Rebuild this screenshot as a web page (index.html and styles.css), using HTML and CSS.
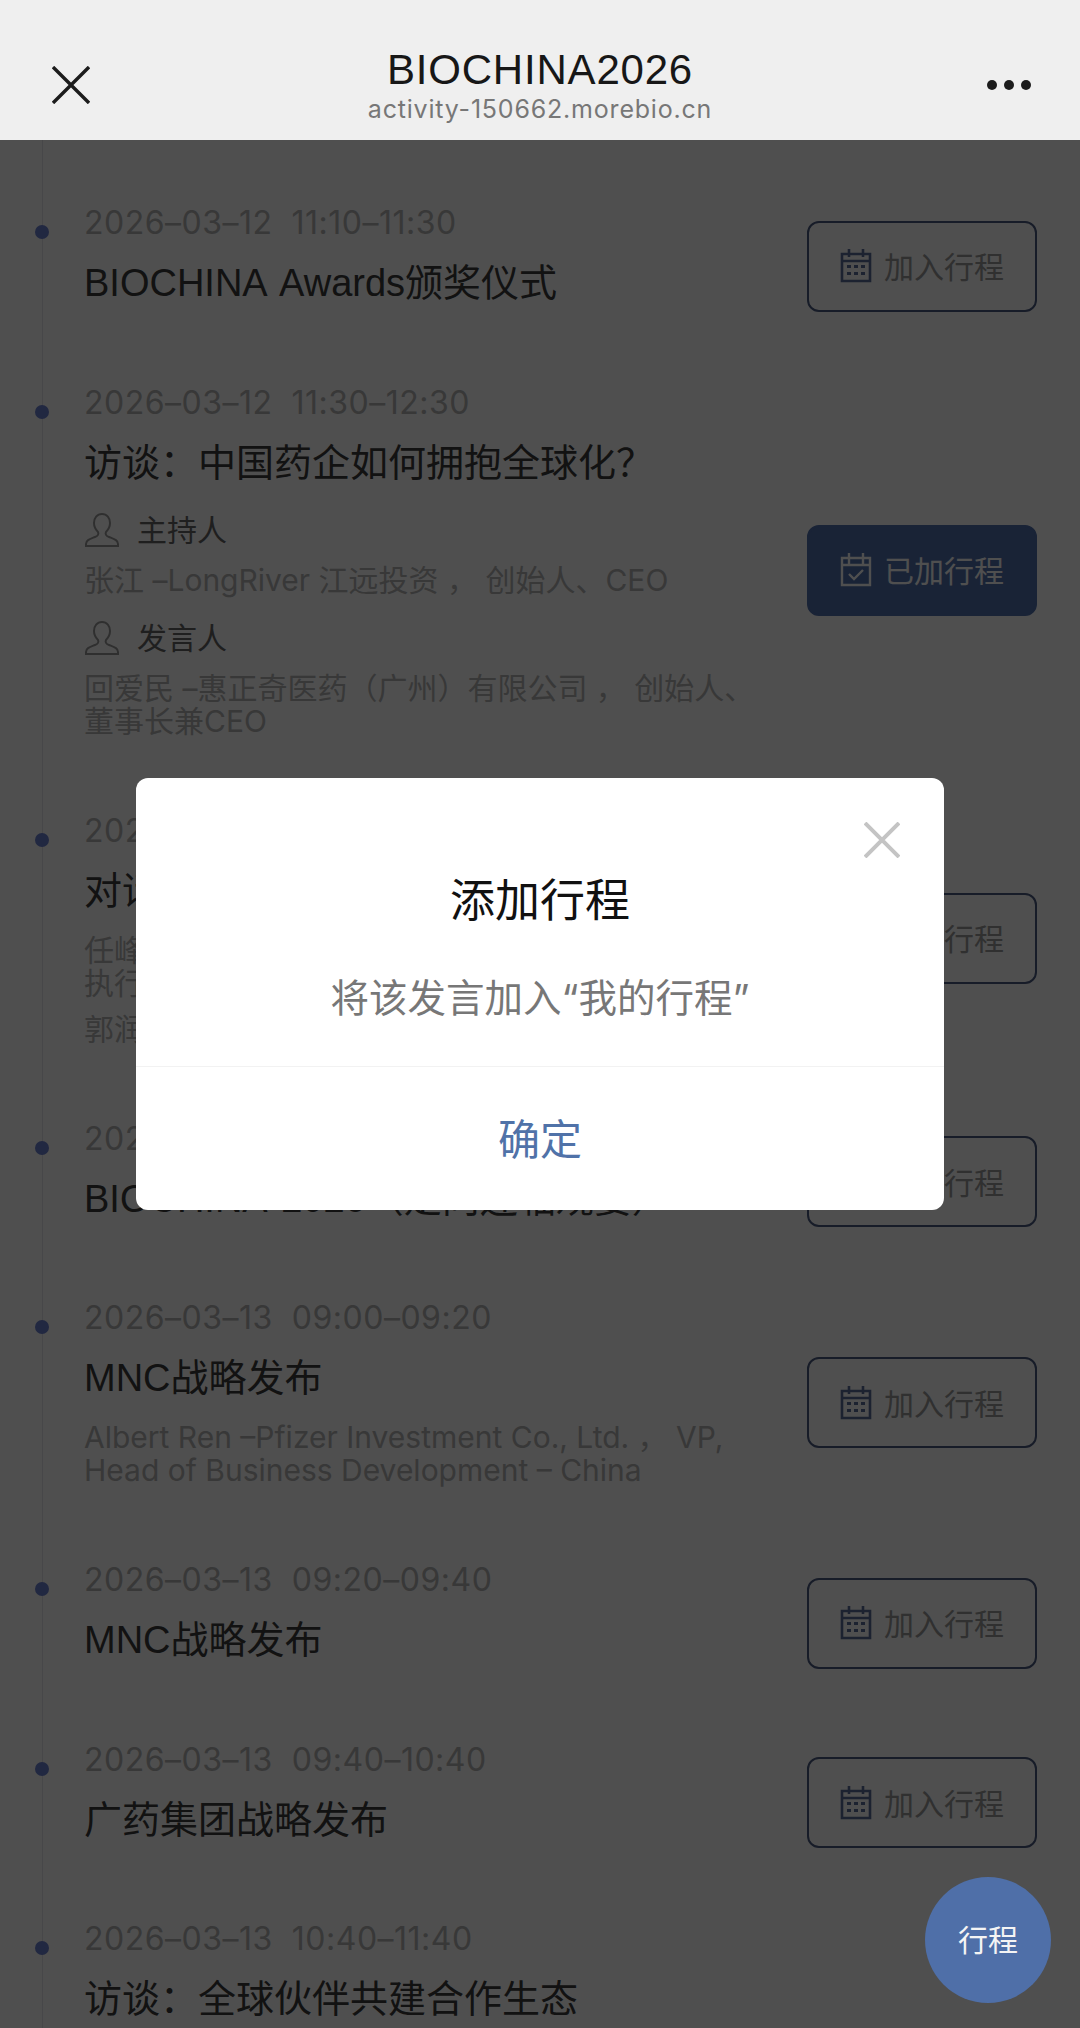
FILE: index.html
```html
<!DOCTYPE html>
<html lang="zh-CN">
  <head>
    <meta charset="UTF-8" />
    <title>BIOCHINA2026</title>
    <link rel="stylesheet" href="styles.css">
  </head>
  <body>
    <svg class="defs" width="0" height="0">
      <symbol id="ico-cal" viewBox="0 0 32 36">
        <path d="M2 7h28v27H2z M2 14h28 M9 2v8 M23 2v8" fill="none" stroke="currentColor" stroke-width="2.6"/>
        <path d="M7 18h4v3H7z M14 18h4v3h-4z M21 18h4v3h-4z M7 25h4v3H7z M14 25h4v3h-4z M21 25h4v3h-4z" fill="currentColor"/>
      </symbol>
      <symbol id="ico-cal-done" viewBox="0 0 32 36">
        <path d="M2 7h28v27H2z M2 14h28 M9 2v12 M23 2v12" fill="none" stroke="currentColor" stroke-width="2.4"/>
        <path d="M9 23l5 5 9-9" fill="none" stroke="currentColor" stroke-width="2.4"/>
      </symbol>
      <symbol id="ico-user" viewBox="0 0 36 36">
        <path d="M18 2c-5 0-8 4-8 9 0 4 2 7 4 9 1 2 0 4-3 5-5 2-9 3-9 7v2h32v-2c0-4-4-5-9-7-3-1-4-3-3-5 2-2 4-5 4-9 0-5-3-9-8-9z" fill="none" stroke="currentColor" stroke-width="2"/>
      </symbol>
    </svg>

    <header class="topbar">
      <svg class="close-ico" viewBox="0 0 38 38"><path d="M1 1l36 36 M37 1L1 37" stroke="currentColor" stroke-width="3.4" fill="none"/></svg>
      <div class="topbar-title">
        <h1>BIOCHINA2026</h1>
        <p>activity-150662.morebio.cn</p>
      </div>
      <div class="more"><i></i><i></i><i></i></div>
    </header>

    <main class="timeline">
      <section class="item">
        <div class="item-text">
          <div class="time">2026–03–12&nbsp;&nbsp;11:10–11:30</div>
          <div class="name">BIOCHINA Awards颁奖仪式</div>
        </div>
        <a class="btn"><svg><use href="#ico-cal"/></svg>加入行程</a>
      </section>

      <section class="item">
        <div class="item-text">
          <div class="time">2026–03–12&nbsp;&nbsp;11:30–12:30</div>
          <div class="name">访谈：中国药企如何拥抱全球化？</div>
          <div class="role"><svg><use href="#ico-user"/></svg>主持人</div>
          <div class="guest">张江 –LongRiver 江远投资 ， 创始人、CEO</div>
          <div class="role"><svg><use href="#ico-user"/></svg>发言人</div>
          <div class="guest">回爱民 –惠正奇医药（广州）有限公司 ， 创始人、董事长兼CEO</div>
        </div>
        <a class="btn btn-added"><svg><use href="#ico-cal-done"/></svg>已加行程</a>
      </section>

      <section class="item">
        <div class="item-text">
          <div class="time">2026–03–12&nbsp;&nbsp;13:30–14:30</div>
          <div class="name">对话：全球创新药投资趋势</div>
          <div class="guest">任峰 –投资有限公司 ， 合伙人、<br>执行董事</div>
          <div class="guest">郭润 –投资有限公司</div>
        </div>
        <a class="btn"><svg><use href="#ico-cal"/></svg>加入行程</a>
      </section>

      <section class="item">
        <div class="item-text">
          <div class="time">2026–03–12&nbsp;&nbsp;14:30–15:00</div>
          <div class="name">BIOCHINA 2026（定向连轴观要）</div>
        </div>
        <a class="btn"><svg><use href="#ico-cal"/></svg>加入行程</a>
      </section>

      <section class="item">
        <div class="item-text">
          <div class="time">2026–03–13&nbsp;&nbsp;09:00–09:20</div>
          <div class="name">MNC战略发布</div>
          <div class="guest">Albert Ren –Pfizer Investment Co., Ltd. ， VP, Head of Business Development – China</div>
        </div>
        <a class="btn"><svg><use href="#ico-cal"/></svg>加入行程</a>
      </section>

      <section class="item">
        <div class="item-text">
          <div class="time">2026–03–13&nbsp;&nbsp;09:20–09:40</div>
          <div class="name">MNC战略发布</div>
        </div>
        <a class="btn"><svg><use href="#ico-cal"/></svg>加入行程</a>
      </section>

      <section class="item">
        <div class="item-text">
          <div class="time">2026–03–13&nbsp;&nbsp;09:40–10:40</div>
          <div class="name">广药集团战略发布</div>
        </div>
        <a class="btn"><svg><use href="#ico-cal"/></svg>加入行程</a>
      </section>

      <section class="item">
        <div class="item-text">
          <div class="time">2026–03–13&nbsp;&nbsp;10:40–11:40</div>
          <div class="name">访谈：全球伙伴共建合作生态</div>
        </div>
      </section>
    </main>

    <div class="mask"></div>

    <div class="dialog">
      <svg class="dialog-close" viewBox="0 0 36 36"><path d="M1 1l34 34 M35 1L1 35" stroke="currentColor" stroke-width="4" fill="none"/></svg>
      <div class="dialog-body">
        <h2>添加行程</h2>
        <p>将该发言加入“我的行程”</p>
      </div>
      <div class="dialog-ok">确定</div>
    </div>

    <a class="fab">行程</a>
  </body>
</html>
```

FILE: styles.css
```css
* {
  box-sizing: border-box;
  margin: 0;
  padding: 0;
}

html, body {
  height: 2028px;
  overflow: hidden;
}

body {
  position: relative;
  background-color: #fff;
  font-family: Inter, "Noto Sans CJK SC", sans-serif;
  color: #333;
}

.defs {
  position: absolute;
}

.topbar {
  display: flex;
  align-items: center;
  justify-content: space-between;
  height: 140px;
  padding: 30px 49px 0 52px;
  background-color: #efefef;
  position: relative;
  z-index: 3;
}

.close-ico {
  width: 38px;
  height: 38px;
  color: #1c1c1c;
}

.topbar-title {
  position: absolute;
  left: 0;
  right: 0;
  top: 46px;
  text-align: center;
}

.topbar-title h1 {
  font-family: "Liberation Sans", "Noto Sans CJK SC", sans-serif;
  font-size: 42px;
  line-height: 48px;
  letter-spacing: .8px;
  font-weight: 400;
  color: #171717;
}

.topbar-title p {
  font-size: 25px;
  line-height: 30px;
  letter-spacing: .8px;
  color: #777;
}

.more {
  display: flex;
  gap: 7px;
}

.more i {
  width: 10px;
  height: 10px;
  border-radius: 50%;
  background-color: #1c1c1c;
}

.timeline {
  margin-left: 42px;
  padding-top: 61px;
  border-left: 1px solid #e4e4ea;
}

.item {
  position: relative;
  display: flex;
  align-items: center;
  justify-content: space-between;
  padding: 0 43px 49px 41px;
}

.item::before {
  content: "";
  position: absolute;
  left: -8px;
  top: 24px;
  width: 14px;
  height: 14px;
  border-radius: 50%;
  background-color: #6c80d0;
}

.item-text {
  width: 680px;
  min-height: 130.5px;
  padding-bottom: 22px;
}

.time {
  font-size: 32px;
  line-height: 44px;
  letter-spacing: .5px;
  color: #b4b4b4;
}

.name {
  margin-top: 16px;
  font-family: "Liberation Sans", "Noto Sans CJK SC", sans-serif;
  font-size: 38px;
  line-height: 44px;
  word-spacing: 5px;
  color: #3a3a3a;
}

.role {
  display: flex;
  align-items: center;
  gap: 17px;
  margin-top: 21px;
  font-size: 30px;
  line-height: 40px;
  color: #666;
}

.name + .role {
  margin-top: 25px;
}

.role svg {
  width: 36px;
  height: 36px;
  color: #999;
}

.guest {
  margin-top: 13px;
  font-size: 30px;
  line-height: 33px;
  color: #b4b4b4;
}

.role + .guest {
  margin-top: 14px;
}

.name + .guest {
  margin-top: 21px;
}

.btn {
  flex: none;
  display: flex;
  align-items: center;
  justify-content: center;
  gap: 12px;
  width: 230px;
  height: 91px;
  padding-bottom: 2px;
  border: 2px solid #4a5a80;
  border-radius: 12px;
  font-size: 30px;
  color: #9a9a9a;
}

.btn svg {
  width: 32px;
  height: 36px;
  color: #5a6f9c;
}

.btn-added {
  background-color: #5070ae;
  border-color: #5070ae;
  color: #fff;
}

.btn-added svg {
  color: #fff;
}

.mask {
  position: absolute;
  left: 0;
  right: 0;
  top: 140px;
  bottom: 0;
  background-color: rgba(0, 0, 0, .69);
  z-index: 1;
}

.dialog {
  position: absolute;
  left: 136px;
  top: 778px;
  width: 808px;
  height: 432px;
  display: flex;
  flex-direction: column;
  background-color: #fff;
  border-radius: 12px;
  z-index: 2;
}

.dialog-close {
  position: absolute;
  right: 44px;
  top: 44px;
  width: 36px;
  height: 36px;
  color: #c4c4c4;
}

.dialog-body {
  height: 289px;
  padding-top: 93px;
  text-align: center;
  border-bottom: 1px solid #f2f2f2;
}

.dialog-body h2 {
  font-size: 45px;
  line-height: 60px;
  font-weight: 400;
  color: #111;
}

.dialog-body p {
  margin-top: 42px;
  font-size: 38.5px;
  line-height: 50px;
  color: #777;
}

.dialog-ok {
  flex: 1;
  display: flex;
  align-items: center;
  justify-content: center;
  padding-bottom: 4px;
  font-size: 42px;
  color: #5072a8;
}

.fab {
  position: absolute;
  left: 925px;
  top: 1877px;
  width: 126px;
  height: 126px;
  display: flex;
  align-items: center;
  justify-content: center;
  padding-bottom: 4px;
  border-radius: 50%;
  background-color: #4f6fa8;
  color: #f4f4f4;
  font-size: 30px;
  z-index: 3;
}
```
